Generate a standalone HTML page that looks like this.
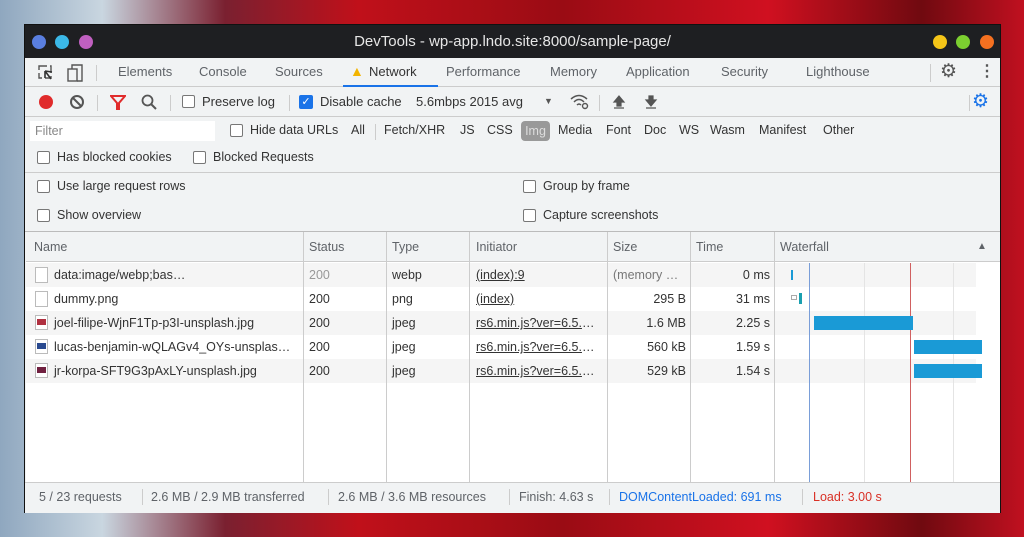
<!DOCTYPE html>
<html><head><meta charset="utf-8"><style>
*{box-sizing:border-box;margin:0;padding:0}
body{width:1024px;height:537px;overflow:hidden;position:relative;font-family:"Liberation Sans",sans-serif;font-size:12.5px;color:#333;
background:linear-gradient(90deg,#8fa7bf 0%,#c9d6e0 10%,#7a2030 22%,#c0101a 35%,#9a0c14 55%,#d01020 75%,#700a10 90%,#c01020 100%)}
.a{position:absolute;white-space:nowrap}
.win{position:absolute;left:24px;top:24px;width:977px;height:489px;background:#f1f3f4;border:1px solid #111}
.title{position:absolute;left:0;top:0;width:100%;height:33px;background:#1e1f22;color:#e6e6e6;font-size:15px;text-align:center;line-height:33px}
.dot{position:absolute;width:14px;height:14px;border-radius:50%;top:10px}
.gray{color:#5f6368}
.cb{position:absolute;width:13px;height:13px;border:1px solid #777;border-radius:2px;background:#fff}
.hl{position:absolute;height:1px;background:#ccc}
.vl{position:absolute;width:1px;background:#ccc}
.row{position:absolute;left:1px;width:950px;height:24px}
u{text-decoration:underline}
</style></head><body>
<div class="win">
 <div class="title">DevTools - wp-app.lndo.site:8000/sample-page/
  <div class="dot" style="left:7px;background:#5a7fe0"></div>
  <div class="dot" style="left:30px;background:#3bb8e8"></div>
  <div class="dot" style="left:54px;background:#c060c0"></div>
  <div class="dot" style="left:908px;background:#f5c518"></div>
  <div class="dot" style="left:931px;background:#7ccf30"></div>
  <div class="dot" style="left:955px;background:#f57020"></div>
 </div>
 <div class="a" style="left:0;top:33px;width:975px;height:29px;background:#f1f3f4;border-bottom:1px solid #ccc"></div>
 <svg class="a" style="left:13px;top:39px" width="50" height="18"><rect x="1" y="2" width="12" height="12" fill="none" stroke="#555" stroke-width="1.4" stroke-dasharray="8 3"/><path d="M7 7 L13 15 M7 7 L7 14 M7 7 L14 8" stroke="#333" stroke-width="1.6" fill="none"/><rect x="30" y="5" width="9" height="12" fill="none" stroke="#555" stroke-width="1.4"/><path d="M34 5 V1 H44 V17 H39" stroke="#555" stroke-width="1.4" fill="none"/></svg>
 <div class="vl" style="left:71px;top:40px;height:16px"></div>
 <div class="a gray" style="left:93px;top:39px;font-size:13px">Elements</div>
 <div class="a gray" style="left:174px;top:39px;font-size:13px">Console</div>
 <div class="a gray" style="left:250px;top:39px;font-size:13px">Sources</div>
 <div class="a" style="left:325px;top:38px;color:#f2b400;font-size:14px">▲</div>
 <div class="a" style="left:344px;top:39px;font-size:13px;color:#333">Network</div>
 <div class="a" style="left:318px;top:60px;width:95px;height:2px;background:#1a73e8"></div>
 <div class="a gray" style="left:421px;top:39px;font-size:13px">Performance</div>
 <div class="a gray" style="left:525px;top:39px;font-size:13px">Memory</div>
 <div class="a gray" style="left:601px;top:39px;font-size:13px">Application</div>
 <div class="a gray" style="left:696px;top:39px;font-size:13px">Security</div>
 <div class="a gray" style="left:781px;top:39px;font-size:13px">Lighthouse</div>
 <div class="vl" style="left:905px;top:39px;height:18px"></div>
 <div class="a" style="left:915px;top:35px;font-size:19px;color:#555">⚙</div>
 <div class="a" style="left:954px;top:36px;font-size:16px;color:#555;font-weight:bold">⋮</div>
 <div class="hl" style="left:0;top:91px;width:975px"></div>
 <div class="a" style="left:14px;top:70px;width:14px;height:14px;border-radius:50%;background:#e02b2b"></div>
 <svg class="a" style="left:44px;top:69px" width="16" height="16"><circle cx="8" cy="8" r="6" fill="none" stroke="#555" stroke-width="2"/><path d="M4 4 L12 12" stroke="#555" stroke-width="2"/></svg>
 <div class="vl" style="left:72px;top:70px;height:16px"></div>
 <svg class="a" style="left:85px;top:70px" width="16" height="15"><path d="M1 1 H15 L9 8 V14 H7 V8 Z" fill="none" stroke="#e02b2b" stroke-width="2"/></svg>
 <svg class="a" style="left:116px;top:69px" width="17" height="17"><circle cx="6.5" cy="6.5" r="5" fill="none" stroke="#555" stroke-width="1.8"/><path d="M10 10 L15 15" stroke="#555" stroke-width="2"/></svg>
 <div class="vl" style="left:145px;top:70px;height:16px"></div>
 <div class="cb" style="left:157px;top:70px"></div>
 <div class="a" style="left:177px;top:69px;font-size:13px">Preserve log</div>
 <div class="vl" style="left:264px;top:70px;height:16px"></div>
 <div class="a" style="left:274px;top:70px;width:14px;height:14px;border-radius:2px;background:#1a73e8;color:#fff;font-size:11px;line-height:14px;text-align:center">✓</div>
 <div class="a" style="left:295px;top:69px;font-size:13px">Disable cache</div>
 <div class="a" style="left:391px;top:69px;font-size:13px">5.6mbps 2015 avg</div>
 <div class="a" style="left:519px;top:71px;font-size:9px;color:#555">▼</div>
 <svg class="a" style="left:545px;top:68px" width="20" height="17"><path d="M1 6 Q9 -1 17 6 M4 9 Q9 4 14 9 M7 12 Q9 10 11 12" fill="none" stroke="#555" stroke-width="1.5"/><circle cx="15" cy="13" r="2.5" fill="none" stroke="#555" stroke-width="1.4"/></svg>
 <div class="vl" style="left:574px;top:70px;height:16px"></div>
 <svg class="a" style="left:587px;top:69px" width="14" height="16"><path d="M7 2 L2 8 H5 V12 H9 V8 H12 Z M2 14 H12" fill="#555" stroke="#555" stroke-width="1.2"/></svg>
 <svg class="a" style="left:619px;top:69px" width="14" height="16"><path d="M7 12 L2 6 H5 V2 H9 V6 H12 Z M2 14 H12" fill="#555" stroke="#555" stroke-width="1.2"/></svg>
 <div class="vl" style="left:944px;top:70px;height:16px"></div>
 <div class="a" style="left:947px;top:65px;font-size:19px;color:#1a73e8">⚙</div>
 <div class="a" style="left:5px;top:96px;width:185px;height:20px;background:#fff"></div>
 <div class="a" style="left:10px;top:99px;color:#888;font-size:12.5px">Filter</div>
 <div class="cb" style="left:205px;top:99px"></div>
 <div class="a" style="left:225px;top:98px">Hide data URLs</div>
 <div class="a" style="left:326px;top:98px">All</div>
 <div class="vl" style="left:350px;top:99px;height:16px"></div>
 <div class="a" style="left:359px;top:98px">Fetch/XHR</div>
 <div class="a" style="left:435px;top:98px">JS</div>
 <div class="a" style="left:462px;top:98px">CSS</div>
 <div class="a" style="left:496px;top:96px;width:29px;height:20px;border-radius:4px;background:#999;color:#ddd;text-align:center;line-height:20px">Img</div>
 <div class="a" style="left:533px;top:98px">Media</div>
 <div class="a" style="left:581px;top:98px">Font</div>
 <div class="a" style="left:619px;top:98px">Doc</div>
 <div class="a" style="left:654px;top:98px">WS</div>
 <div class="a" style="left:685px;top:98px">Wasm</div>
 <div class="a" style="left:734px;top:98px">Manifest</div>
 <div class="a" style="left:798px;top:98px">Other</div>
 <div class="cb" style="left:12px;top:126px"></div>
 <div class="a" style="left:32px;top:125px">Has blocked cookies</div>
 <div class="cb" style="left:168px;top:126px"></div>
 <div class="a" style="left:188px;top:125px">Blocked Requests</div>
 <div class="hl" style="left:0;top:147px;width:975px"></div>
 <div class="cb" style="left:12px;top:155px"></div>
 <div class="a" style="left:32px;top:154px">Use large request rows</div>
 <div class="cb" style="left:498px;top:155px"></div>
 <div class="a" style="left:518px;top:154px">Group by frame</div>
 <div class="cb" style="left:12px;top:184px"></div>
 <div class="a" style="left:32px;top:183px">Show overview</div>
 <div class="cb" style="left:498px;top:184px"></div>
 <div class="a" style="left:518px;top:183px">Capture screenshots</div>
 <div class="hl" style="left:0;top:206px;width:975px;background:#bbb"></div>
 <div class="a" style="left:1px;top:207px;width:974px;height:250px;background:#fff"></div>
 <div class="a" style="left:1px;top:207px;width:974px;height:30px;background:#f1f3f4;border-bottom:1px solid #ccc"></div>
 <div class="row" style="top:238px;background:#f5f5f5"></div>
 <div class="row" style="top:286px;background:#f5f5f5"></div>
 <div class="row" style="top:334px;background:#f5f5f5"></div>
 <div class="vl" style="left:278px;top:207px;height:250px"></div>
 <div class="vl" style="left:361px;top:207px;height:250px"></div>
 <div class="vl" style="left:444px;top:207px;height:250px"></div>
 <div class="vl" style="left:582px;top:207px;height:250px"></div>
 <div class="vl" style="left:665px;top:207px;height:250px"></div>
 <div class="vl" style="left:749px;top:207px;height:250px"></div>
 <div class="vl" style="left:839px;top:238px;height:219px;background:#e4e4e4"></div>
 <div class="vl" style="left:928px;top:238px;height:219px;background:#e4e4e4"></div>
 <div class="vl" style="left:784px;top:238px;height:219px;background:#7a9ed8"></div>
 <div class="vl" style="left:885px;top:238px;height:219px;background:#d06060"></div>
 <div class="a gray" style="left:9px;top:215px">Name</div>
 <div class="a gray" style="left:284px;top:215px">Status</div>
 <div class="a gray" style="left:367px;top:215px">Type</div>
 <div class="a gray" style="left:451px;top:215px">Initiator</div>
 <div class="a gray" style="left:588px;top:215px">Size</div>
 <div class="a gray" style="left:671px;top:215px">Time</div>
 <div class="a gray" style="left:755px;top:215px">Waterfall</div>
 <div class="a gray" style="left:952px;top:216px;font-size:10px">▲</div>
 <div class="a" style="left:10px;top:242px;width:13px;height:16px;border:1px solid #bbb;background:#fff"></div>
 <div class="a" style="left:29px;top:243px">data:image/webp;bas…</div>
 <div class="a" style="left:284px;top:243px;color:#999">200</div>
 <div class="a" style="left:367px;top:243px">webp</div>
 <div class="a" style="left:451px;top:243px"><u>(index):9</u></div>
 <div class="a" style="left:588px;top:243px;color:#777">(memory …</div>
 <div class="a" style="left:670px;top:243px;width:75px;text-align:right">0 ms</div>
 <div class="a" style="left:766px;top:245px;width:2px;height:10px;background:#1a9ad6"></div>
 <div class="a" style="left:10px;top:266px;width:13px;height:16px;border:1px solid #bbb;background:#fff"></div>
 <div class="a" style="left:29px;top:267px">dummy.png</div>
 <div class="a" style="left:284px;top:267px">200</div>
 <div class="a" style="left:367px;top:267px">png</div>
 <div class="a" style="left:451px;top:267px"><u>(index)</u></div>
 <div class="a" style="left:586px;top:267px;width:75px;text-align:right">295 B</div>
 <div class="a" style="left:670px;top:267px;width:75px;text-align:right">31 ms</div>
 <div class="a" style="left:766px;top:270px;width:6px;height:5px;border:1px solid #aaa"></div>
 <div class="a" style="left:774px;top:268px;width:3px;height:11px;background:#1aa0b0"></div>
 <div class="a" style="left:10px;top:290px;width:13px;height:15px;border:1px solid #bbb;background:#fff"><div style="margin:3px 1px;height:6px;background:#b03040"></div></div>
 <div class="a" style="left:29px;top:291px">joel-filipe-WjnF1Tp-p3I-unsplash.jpg</div>
 <div class="a" style="left:284px;top:291px">200</div>
 <div class="a" style="left:367px;top:291px">jpeg</div>
 <div class="a" style="left:451px;top:291px"><u>rs6.min.js?ver=6.5.</u>…</div>
 <div class="a" style="left:586px;top:291px;width:75px;text-align:right">1.6 MB</div>
 <div class="a" style="left:670px;top:291px;width:75px;text-align:right">2.25 s</div>
 <div class="a" style="left:789px;top:291px;width:99px;height:14px;background:#1a9ad6"></div>
 <div class="a" style="left:10px;top:314px;width:13px;height:15px;border:1px solid #bbb;background:#fff"><div style="margin:3px 1px;height:6px;background:#2a4a90"></div></div>
 <div class="a" style="left:29px;top:315px">lucas-benjamin-wQLAGv4_OYs-unsplas…</div>
 <div class="a" style="left:284px;top:315px">200</div>
 <div class="a" style="left:367px;top:315px">jpeg</div>
 <div class="a" style="left:451px;top:315px"><u>rs6.min.js?ver=6.5.</u>…</div>
 <div class="a" style="left:586px;top:315px;width:75px;text-align:right">560 kB</div>
 <div class="a" style="left:670px;top:315px;width:75px;text-align:right">1.59 s</div>
 <div class="a" style="left:889px;top:315px;width:68px;height:14px;background:#1a9ad6"></div>
 <div class="a" style="left:10px;top:338px;width:13px;height:15px;border:1px solid #bbb;background:#fff"><div style="margin:3px 1px;height:6px;background:#702040"></div></div>
 <div class="a" style="left:29px;top:339px">jr-korpa-SFT9G3pAxLY-unsplash.jpg</div>
 <div class="a" style="left:284px;top:339px">200</div>
 <div class="a" style="left:367px;top:339px">jpeg</div>
 <div class="a" style="left:451px;top:339px"><u>rs6.min.js?ver=6.5.</u>…</div>
 <div class="a" style="left:586px;top:339px;width:75px;text-align:right">529 kB</div>
 <div class="a" style="left:670px;top:339px;width:75px;text-align:right">1.54 s</div>
 <div class="a" style="left:889px;top:339px;width:68px;height:14px;background:#1a9ad6"></div>
 <div class="a" style="left:0;top:457px;width:975px;height:31px;background:#f1f3f4;border-top:1px solid #ccc"></div>
 <div class="a gray" style="left:14px;top:465px">5 / 23 requests</div>
 <div class="vl" style="left:117px;top:464px;height:16px"></div>
 <div class="a gray" style="left:126px;top:465px">2.6 MB / 2.9 MB transferred</div>
 <div class="vl" style="left:303px;top:464px;height:16px"></div>
 <div class="a gray" style="left:313px;top:465px">2.6 MB / 3.6 MB resources</div>
 <div class="vl" style="left:484px;top:464px;height:16px"></div>
 <div class="a gray" style="left:494px;top:465px">Finish: 4.63 s</div>
 <div class="vl" style="left:584px;top:464px;height:16px"></div>
 <div class="a" style="left:594px;top:465px;color:#1a73e8">DOMContentLoaded: 691 ms</div>
 <div class="vl" style="left:777px;top:464px;height:16px"></div>
 <div class="a" style="left:788px;top:465px;color:#d93025">Load: 3.00 s</div>
</div>
</body></html>
